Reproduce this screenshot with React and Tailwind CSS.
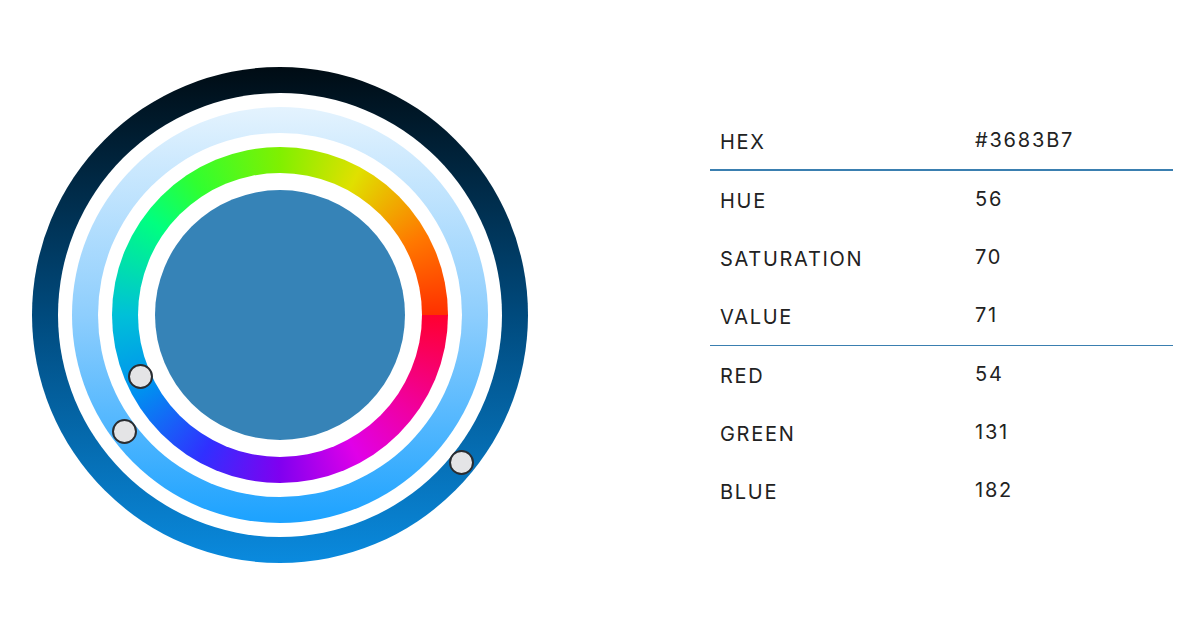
import React from 'react'

const HSV_ROWS = [
  { label: 'HUE', value: '56' },
  { label: 'SATURATION', value: '70' },
  { label: 'VALUE', value: '71' },
]

const RGB_ROWS = [
  { label: 'RED', value: '54' },
  { label: 'GREEN', value: '131' },
  { label: 'BLUE', value: '182' },
]

function Handle({ x, y }) {
  // x / y are the centre of the knob inside the wheel box
  return (
    <div
      className="absolute w-[25px] h-[25px] -ml-[12.5px] -mt-[12.5px] rounded-full bg-[#e4e4e6] border-2 border-[#2a2d31]"
      style={{ left: x, top: y }}
    />
  )
}

function Row({ label, value }) {
  return (
    <div className="flex items-center h-[58px] pl-[10px] pt-[2px]">
      <span className="w-[255px] text-[20px] tracking-[0.085em] text-[#222]">{label}</span>
      <span className="text-[20px] tracking-[0.09em] text-[#222] -mt-[4px]">{value}</span>
    </div>
  )
}

export default function App() {
  return (
    <div
      className="w-[1200px] h-[630px] bg-white flex items-start pl-[32px] pt-[67px]"
      style={{ fontFamily: 'Inter, "Liberation Sans", sans-serif' }}
    >
      {/* Rueda de color */}
      <div className="relative shrink-0">
        <div className="w-[496px] h-[496px] rounded-full p-[26px] bg-[linear-gradient(to_bottom,#000c14,#004a7d_50%,#0a8ade)]">
          <div className="w-full h-full rounded-full bg-white p-[14px]">
            <div className="w-full h-full rounded-full p-[26px] bg-[linear-gradient(to_bottom,#e4f3fe,#8ecefd_50%,#1ca2ff)]">
              <div className="w-full h-full rounded-full bg-white p-[14px]">
                <div className="w-full h-full rounded-full p-[26px] bg-[conic-gradient(from_90deg,#ff0030,#f000a0_10%,#e000e8_17%,#8000f0_25%,#3030ff_33%,#0090f0_42%,#00c0d8_50%,#00ff80_60%,#30ff30_66%,#80f000_75%,#e0e000_83%,#ff7800_92%,#ff3000)]">
                  <div className="w-full h-full rounded-full bg-white p-[17px]">
                    <div className="w-full h-full rounded-full bg-[#3683B7]" />
                  </div>
                </div>
              </div>
            </div>
          </div>
        </div>
        <Handle x={108.5} y={309.5} />
        <Handle x={92.5} y={364} />
        <Handle x={429.5} y={395} />
      </div>

      {/* Tabla de valores */}
      <div className="ml-[182px] mt-[45px] w-[463px]">
        <div className="flex items-center h-[57px] pl-[10px] pt-[2px]">
          <span className="w-[255px] text-[20px] tracking-[0.085em] text-[#222]">HEX</span>
          <span className="text-[20px] tracking-[0.09em] text-[#222] -mt-[4px]">#3683B7</span>
        </div>
        <div className="h-[2px] bg-[#3a7fb0]" />
        {HSV_ROWS.map(r => <Row key={r.label} {...r} />)}
        <div className="h-px bg-[#3a7fb0]" />
        {RGB_ROWS.map(r => <Row key={r.label} {...r} />)}
      </div>
    </div>
  )
}
